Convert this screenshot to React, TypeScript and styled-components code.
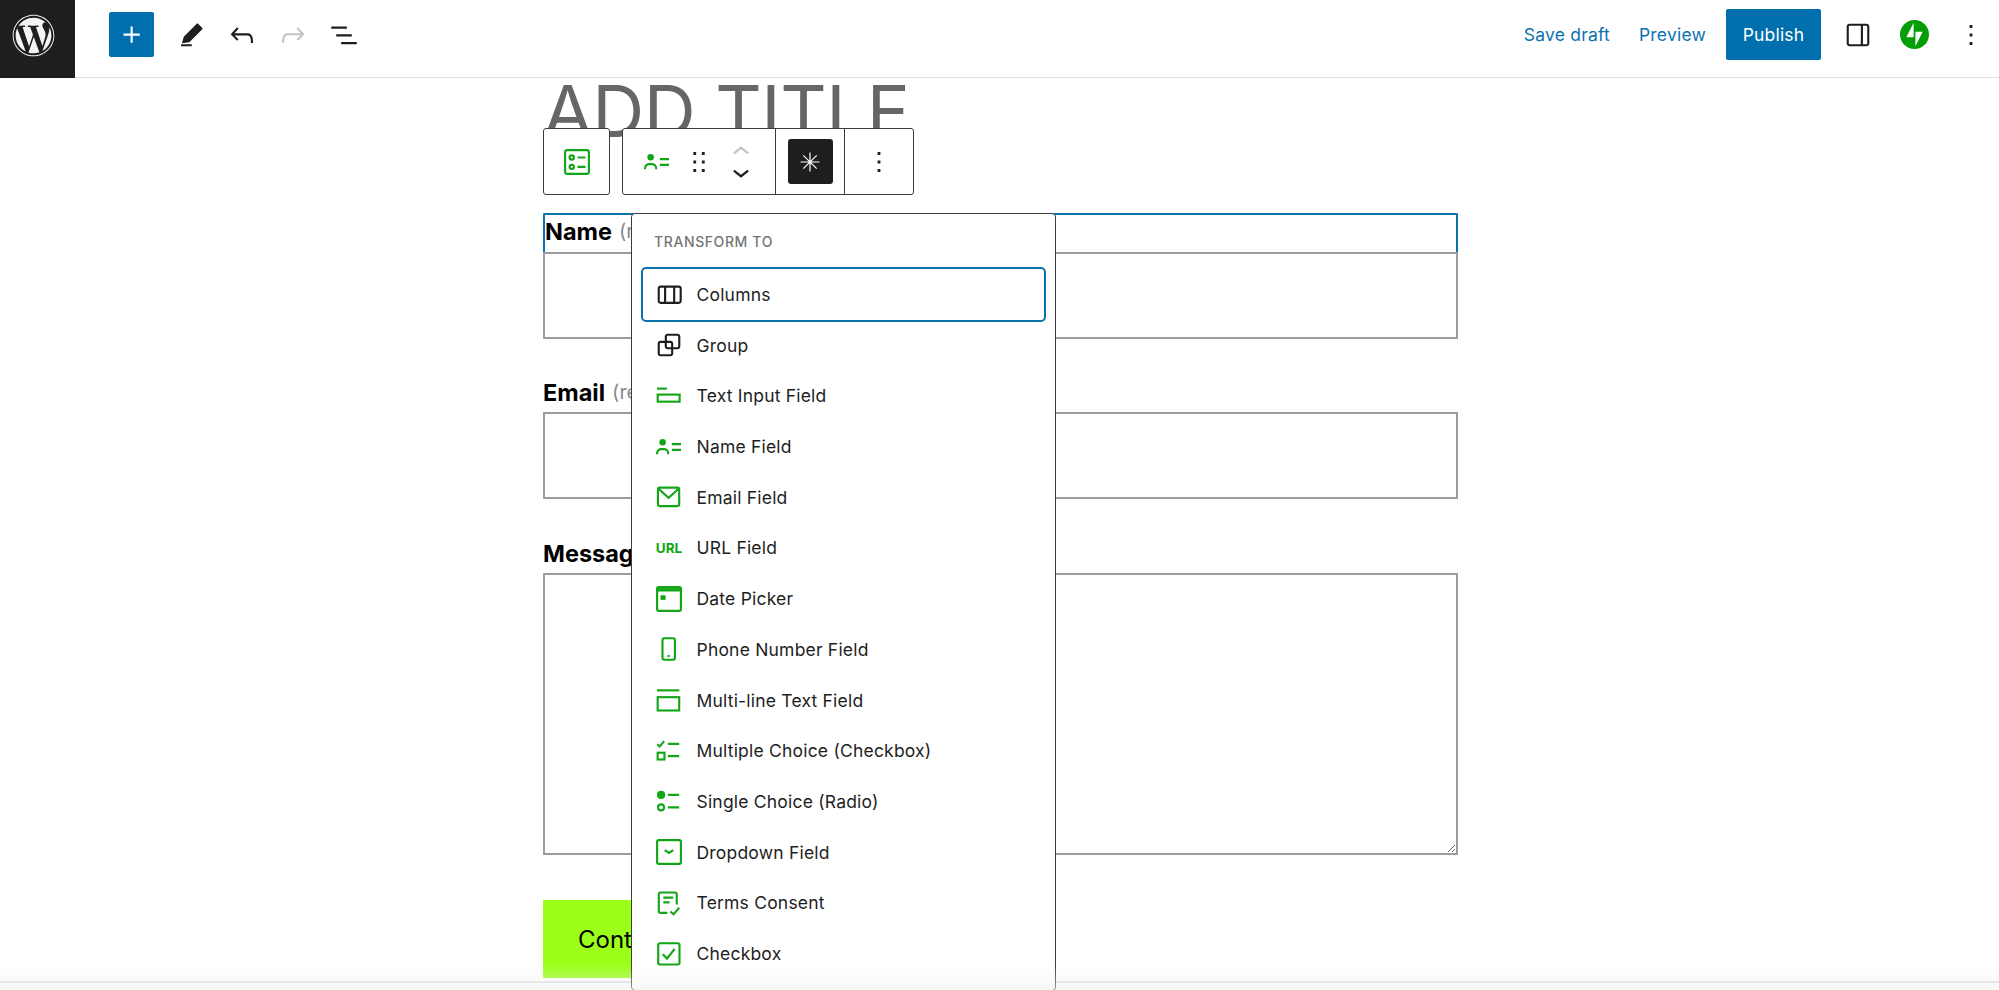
import React from 'react';
import styled, { createGlobalStyle } from 'styled-components';
import { FaWordpress } from 'react-icons/fa';

const GREEN = '#12a516';
const BLUE = '#016fae';
const FONT = 'Inter, "Liberation Sans", sans-serif';

const GlobalStyle = createGlobalStyle`
  html, body {
    margin: 0;
    padding: 0;
    background: #fff;
    font-family: ${FONT};
  }
  * {
    box-sizing: border-box;
  }
`;

const Page = styled.div`
  position: relative;
  display: flex;
  flex-direction: column;
  height: 100vh;
  overflow: hidden;
`;

const TopBar = styled.header`
  display: flex;
  justify-content: space-between;
  height: 78px;
  flex: none;
  border-bottom: 1px solid #e0e0e0;
`;

const BarSide = styled.div`
  display: flex;
  align-items: center;
  height: 69px;
`;

const ActionsSide = styled(BarSide)`
  padding-right: 3px;
`;

const LogoBox = styled.div`
  display: flex;
  align-items: center;
  width: 75px;
  height: 78px;
  padding: 0 0 8px 12px;
  background: #1e1e1e;
  color: #f4f4f4;
  font-size: 43px;
`;

const LeftCluster = styled.div`
  display: flex;
`;

const InserterButton = styled.div`
  display: flex;
  align-items: center;
  justify-content: center;
  width: 45px;
  height: 45px;
  margin: 0 11px 0 34px;
  border-radius: 2px;
  background: ${BLUE};
  color: #fff;
`;

const BarButton = styled.div<{ $muted?: boolean; $gap?: number }>`
  display: flex;
  align-items: center;
  justify-content: center;
  width: 51px;
  height: 51px;
  margin-left: ${props => props.$gap ?? 0}px;
  color: ${props => (props.$muted ? '#c4c4c4' : '#1e1e1e')};
`;

const TextAction = styled.span<{ $gap: number }>`
  margin-left: ${props => props.$gap}px;
  color: #0a72ad;
  font-size: 17.5px;
  letter-spacing: 0.2px;
`;

const PublishButton = styled.div`
  display: flex;
  align-items: center;
  justify-content: center;
  width: 95px;
  height: 51px;
  margin-left: 20px;
  border-radius: 2px;
  background: ${BLUE};
  color: #fff;
  font-size: 17.5px;
  letter-spacing: 0.2px;
`;

const Editor = styled.main`
  flex: 1;
  min-height: 0;
`;

const Canvas = styled.div`
  position: relative;
  width: 915px;
  margin-left: 543px;
`;

const PostTitle = styled.div`
  height: 135px;
  color: #666;
  font-size: 72px;
  font-weight: 380;
  letter-spacing: -0.4px;
  line-height: 66px;
`;

const Field = styled.div<{ $spacing: number }>`
  margin-bottom: ${props => props.$spacing}px;
`;

const FieldLabel = styled.div<{ $focused?: boolean }>`
  display: flex;
  align-items: center;
  gap: 7px;
  height: 39px;
  padding-bottom: ${props => (props.$focused ? 5 : 3)}px;
  border: 2px solid ${props => (props.$focused ? '#0a72ad' : 'transparent')};
  border-width: 2px 2px 0;
  border-radius: 2px 2px 0 0;
  margin-left: ${props => (props.$focused ? 0 : -2)}px;
`;

const LabelName = styled.span`
  color: #000;
  font-size: 23.5px;
  font-weight: 700;
`;

const Required = styled.span`
  color: #8a8a8a;
  font-size: 20px;
`;

const TextInput = styled.input`
  display: block;
  width: 100%;
  height: 87px;
  border: 2px solid #9b9ba0;
  border-radius: 0;
  background: #fff;
  outline: none;
`;

const MessageInput = styled.textarea`
  display: block;
  width: 100%;
  height: 282px;
  border: 2px solid #9b9ba0;
  border-radius: 0;
  background: #fff;
  outline: none;
`;

const SubmitButton = styled.div`
  display: flex;
  align-items: center;
  width: 300px;
  height: 78px;
  padding-left: 35px;
  background: #9bff1a;
  color: #000;
  font-size: 24px;
`;

const BlockToolbar = styled.div`
  position: absolute;
  top: 50px;
  left: 0;
  display: flex;
  gap: 12px;
  height: 67px;
`;

const ToolGroup = styled.div`
  display: flex;
  height: 100%;
  border: 1px solid #3c3c3c;
  border-radius: 3px;
  background: #fff;
`;

const ToolSection = styled.div<{ $width: number; $divided?: boolean }>`
  display: flex;
  align-items: center;
  justify-content: center;
  gap: 8px;
  width: ${props => props.$width}px;
  border-left: ${props => (props.$divided ? '1px solid #3c3c3c' : 'none')};
  color: #1e1e1e;
`;

const MoverStack = styled.div`
  display: flex;
  flex-direction: column;
  svg + svg {
    margin-top: -14px;
  }
`;

const StyleButton = styled.div`
  display: flex;
  align-items: center;
  justify-content: center;
  width: 45px;
  height: 45px;
  border-radius: 3px;
  background: #1e1e1e;
`;

const TransformMenu = styled.div`
  position: absolute;
  top: 135px;
  left: 88px;
  width: 425px;
  height: 778px;
  padding: 0 11px;
  border: 1px solid #3c3c3c;
  border-radius: 4px;
  background: #fff;
`;

const MenuHeading = styled.div`
  display: flex;
  align-items: center;
  height: 55px;
  padding-left: 11px;
  color: #757575;
  font-size: 14px;
  font-weight: 500;
  letter-spacing: 0.6px;
  text-transform: uppercase;
`;

const MenuRow = styled.div<{ $focused?: boolean }>`
  display: flex;
  align-items: center;
  gap: 10.5px;
  height: 50.72px;
  padding-left: 9px;
  border-radius: 3px;
  outline: ${props => (props.$focused ? '2px solid #0a72ad' : 'none')};
  color: #1e1e1e;
  font-size: 17.5px;
  letter-spacing: 0.2px;
`;

const UrlGlyph = styled.span`
  flex: none;
  width: 34px;
  color: ${GREEN};
  font-size: 13.5px;
  font-weight: 700;
  letter-spacing: 0;
  text-align: center;
`;

const Footer = styled.footer`
  flex: none;
  height: 9px;
  border-top: 2px solid #e2e2e2;
`;

const BottomFade = styled.div`
  position: absolute;
  left: 0;
  right: 0;
  bottom: 0;
  height: 26px;
  background: linear-gradient(rgba(240, 240, 240, 0), rgba(240, 240, 240, 0.5));
  pointer-events: none;
`;

const Svg = styled.svg<{ $color?: string }>`
  flex: none;
  display: block;
  width: 34px;
  height: 34px;
  fill: ${props => props.$color ?? 'currentColor'};
`;

const Line = styled.svg`
  flex: none;
  display: block;
  width: 34px;
  height: 34px;
  fill: none;
  stroke: ${GREEN};
  stroke-width: 1.5;
`;

const Fill = ({ d }: { d: string }) => (
  <Svg viewBox="0 0 24 24">
    <path d={d} />
  </Svg>
);

const PLUS = 'M11 12.5V17.5H12.5V12.5H17.5V11H12.5V6H11V11H6V12.5H11Z';
const UNDO =
  'M18.3 11.7c-.6-.6-1.4-.9-2.3-.9H6.7l2.9-3.3-1.1-1-4.5 5L8.5 16l1-1-2.7-2.7H16c.5 0 .9.2 1.3.5 1 1 1 3.4 1 4.5v.3h1.5v-.2c0-1.5 0-4.3-1.5-5.7z';
const REDO =
  'M15.6 6.5l-1.1 1 2.9 3.3H8c-.9 0-1.7.3-2.3.9-1.4 1.5-1.4 4.2-1.4 5.6v.2h1.5v-.3c0-1.1 0-3.5 1-4.5.3-.3.7-.5 1.3-.5h9.2L14.5 15l1.1 1.1 4.6-4.6-4.6-5z';
const LIST_VIEW = 'M3 6h11v1.5H3V6Zm3.5 5.5h11V13h-11v-1.5ZM21 17H10v1.5h11V17Z';
const PEN = 'M5 20h7.5v-1.5H5V20zM5.6 17.8l1.3-4.6 9-9c.4-.4.9-.4 1.3 0l2.6 2.6c.4.4.4.9 0 1.3l-9 9-5.2.7z';
const MORE = 'M13 19h-2v-2h2v2zm0-6h-2v-2h2v2zm0-6h-2V5h2v2z';
const DRAG = 'M8 7h2V5H8v2zm0 6h2v-2H8v2zm0 6h2v-2H8v2zm6-14v2h2V5h-2zm0 8h2v-2h-2v2zm0 6h2v-2h-2v2z';
const CHEVRON_UP = 'M6.5 12.4L12 8l5.5 4.4-.9 1.2L12 10l-4.5 3.6-1-1.2z';
const CHEVRON_DOWN = 'M17.5 11.6L12 16l-5.5-4.4.9-1.2L12 14l4.5-3.6 1 1.2z';
const SIDEBAR =
  'M18 4H6c-1.1 0-2 .9-2 2v12c0 1.1.9 2 2 2h12c1.1 0 2-.9 2-2V6c0-1.1-.9-2-2-2zm-4 14.5H6c-.3 0-.5-.2-.5-.5V6c0-.3.2-.5.5-.5h8v13zm4.5-.5c0 .3-.2.5-.5.5h-2.5v-13H18c.3 0 .5.2.5.5v12z';
const COLUMNS =
  'M19 6H6c-1.1 0-2 .9-2 2v9c0 1.1.9 2 2 2h13c1.1 0 2-.9 2-2V8c0-1.1-.9-2-2-2zm-4.1 1.5v10H10v-10h4.9zM5.5 17V8c0-.3.2-.5.5-.5h2.5v10H6c-.3 0-.5-.2-.5-.5zm14 0c0 .3-.2.5-.5.5h-2.6v-10H19c.3 0 .5.2.5.5v9z';
const GROUP =
  'M18 4h-7c-1.1 0-2 .9-2 2v3H6c-1.1 0-2 .9-2 2v7c0 1.1.9 2 2 2h7c1.1 0 2-.9 2-2v-3h3c1.1 0 2-.9 2-2V6c0-1.1-.9-2-2-2zm-4.5 14c0 .3-.2.5-.5.5H6c-.3 0-.5-.2-.5-.5v-7c0-.3.2-.5.5-.5h3V13c0 1.1.9 2 2 2h2.5v3zm0-4.5H11c-.3 0-.5-.2-.5-.5v-2.5H13c.3 0 .5.2.5.5v2.5zm5-.5c0 .3-.2.5-.5.5h-3V11c0-1.1-.9-2-2-2h-2.5V6c0-.3.2-.5.5-.5h7c.3 0 .5.2.5.5v7z';

const NameIcon = () => (
  <Line viewBox="0 0 24 24">
    <circle cx="7.5" cy="8.6" r="2.3" fill={GREEN} stroke="none" />
    <path d="M3.6 17.2v-.8c0-1.7 1.3-2.9 3-2.9h1.8c1.7 0 3 1.2 3 2.9v.8M14 10h6.5M14 14h6.5" />
  </Line>
);

const FormIcon = () => (
  <Line viewBox="0 0 24 24">
    <rect x="3.6" y="3.6" width="16.8" height="16.8" rx="1.6" />
    <circle cx="8.3" cy="8.8" r="1.5" />
    <circle cx="8.3" cy="15.4" r="1.5" />
    <path d="M12.4 8.8H18M12.4 15.4H18" />
  </Line>
);

const AsteriskIcon = () => (
  <svg viewBox="0 0 24 24" width="24" height="24" fill="none" stroke="#fff" strokeWidth="1.2">
    <path d="M12 2.5v19M2.5 12h19M5.3 5.3l13.4 13.4M18.7 5.3L5.3 18.7" />
  </svg>
);

const JetpackIcon = () => (
  <svg viewBox="0 0 32 32" width="29" height="29">
    <circle cx="16" cy="16" r="16" fill="#069e08" />
    <path fill="#fff" d="M15 19H7l8-16zM17 29V13h8z" />
  </svg>
);

const fieldIcons: Record<string, React.ReactNode> = {
  text: (
    <Line viewBox="0 0 24 24">
      <path d="M3.5 6.8h7" />
      <rect x="4" y="11" width="15.5" height="5" />
    </Line>
  ),
  email: (
    <Line viewBox="0 0 24 24">
      <rect x="4.2" y="5.4" width="15" height="13" rx="1.2" />
      <path d="M4.6 6.2l7.1 6.4 7.1-6.4" />
    </Line>
  ),
  date: (
    <Line viewBox="0 0 24 24">
      <rect x="3.6" y="3.6" width="16.8" height="16.8" rx="1.2" />
      <path d="M3.6 5.5h16.8" strokeWidth="2.4" />
      <rect x="6" y="9.4" width="3.6" height="3.2" fill={GREEN} stroke="none" />
    </Line>
  ),
  phone: (
    <Line viewBox="0 0 24 24">
      <rect x="7.4" y="4.4" width="8.8" height="15.2" rx="1.4" />
      <rect x="11" y="16.2" width="1.5" height="1.5" fill={GREEN} stroke="none" />
    </Line>
  ),
  multiline: (
    <Line viewBox="0 0 24 24">
      <path d="M3.5 5.2h15.8" />
      <rect x="4" y="10" width="15.2" height="9.4" />
    </Line>
  ),
  checkboxes: (
    <Line viewBox="0 0 24 24">
      <path d="M3.8 7.2l1.6 1.6L8.6 5M11.2 7h8M11.2 15.6h8" />
      <rect x="4" y="13.2" width="4.8" height="4.8" />
    </Line>
  ),
  radio: (
    <Line viewBox="0 0 24 24">
      <circle cx="6.4" cy="7" r="2.9" fill={GREEN} stroke="none" />
      <circle cx="6.4" cy="15.8" r="2.1" />
      <path d="M11.2 7h8M11.2 15.8h8" />
    </Line>
  ),
  dropdown: (
    <Line viewBox="0 0 24 24">
      <rect x="3.6" y="3.6" width="16.8" height="16.8" rx="1.2" />
      <path d="M9 10.6l3 2 3-2" />
    </Line>
  ),
  terms: (
    <Line viewBox="0 0 24 24">
      <path d="M17.5 13V6a1.4 1.4 0 0 0-1.4-1.4H6.2A1.4 1.4 0 0 0 4.8 6v11.6A1.4 1.4 0 0 0 6.2 19h4.6" />
      <path d="M8 8.2h7M8 11.6h4.4M13 18l2.2 2 4-4.6" />
    </Line>
  ),
  checkbox: (
    <Line viewBox="0 0 24 24">
      <rect x="4.4" y="4.4" width="15" height="15" rx="1.2" />
      <path d="M7.6 12.2l3 3 5.4-6.8" />
    </Line>
  ),
};

const menuItems: { label: string; icon: React.ReactNode }[] = [
  { label: 'Columns', icon: <Fill d={COLUMNS} /> },
  { label: 'Group', icon: <Fill d={GROUP} /> },
  { label: 'Text Input Field', icon: fieldIcons.text },
  { label: 'Name Field', icon: <NameIcon /> },
  { label: 'Email Field', icon: fieldIcons.email },
  { label: 'URL Field', icon: <UrlGlyph>URL</UrlGlyph> },
  { label: 'Date Picker', icon: fieldIcons.date },
  { label: 'Phone Number Field', icon: fieldIcons.phone },
  { label: 'Multi-line Text Field', icon: fieldIcons.multiline },
  { label: 'Multiple Choice (Checkbox)', icon: fieldIcons.checkboxes },
  { label: 'Single Choice (Radio)', icon: fieldIcons.radio },
  { label: 'Dropdown Field', icon: fieldIcons.dropdown },
  { label: 'Terms Consent', icon: fieldIcons.terms },
  { label: 'Checkbox', icon: fieldIcons.checkbox },
];

const App = () => {
  return (
    <Page>
      <GlobalStyle />
      <TopBar>
        <LeftCluster>
          <LogoBox>
            <FaWordpress />
          </LogoBox>
          <BarSide>
            <InserterButton>
              <Fill d={PLUS} />
            </InserterButton>
            <BarButton>
              <Fill d={PEN} />
            </BarButton>
            <BarButton>
              <Fill d={UNDO} />
            </BarButton>
            <BarButton $muted>
              <Fill d={REDO} />
            </BarButton>
            <BarButton>
              <Fill d={LIST_VIEW} />
            </BarButton>
          </BarSide>
        </LeftCluster>
        <ActionsSide>
          <TextAction $gap={0}>Save draft</TextAction>
          <TextAction $gap={29}>Preview</TextAction>
          <PublishButton>Publish</PublishButton>
          <BarButton $gap={11}>
            <Fill d={SIDEBAR} />
          </BarButton>
          <BarButton $gap={6}>
            <JetpackIcon />
          </BarButton>
          <BarButton $gap={5}>
            <Fill d={MORE} />
          </BarButton>
        </ActionsSide>
      </TopBar>

      <Editor>
        <Canvas>
          <PostTitle>ADD TITLE</PostTitle>
          <Field $spacing={34}>
            <FieldLabel $focused>
              <LabelName>Name</LabelName>
              <Required>(required)</Required>
            </FieldLabel>
            <TextInput readOnly />
          </Field>
          <Field $spacing={35}>
            <FieldLabel>
              <LabelName>Email</LabelName>
              <Required>(required)</Required>
            </FieldLabel>
            <TextInput readOnly />
          </Field>
          <Field $spacing={45}>
            <FieldLabel>
              <LabelName>Message</LabelName>
              <Required>(required)</Required>
            </FieldLabel>
            <MessageInput readOnly />
          </Field>
          <SubmitButton>Contact Us</SubmitButton>

          <BlockToolbar>
            <ToolGroup>
              <ToolSection $width={65}>
                <FormIcon />
              </ToolSection>
            </ToolGroup>
            <ToolGroup>
              <ToolSection $width={152}>
                <NameIcon />
                <Fill d={DRAG} />
                <MoverStack>
                  <Svg viewBox="0 0 24 24" $color="#c4c4c4">
                    <path d={CHEVRON_UP} />
                  </Svg>
                  <Fill d={CHEVRON_DOWN} />
                </MoverStack>
              </ToolSection>
              <ToolSection $width={69} $divided>
                <StyleButton>
                  <AsteriskIcon />
                </StyleButton>
              </ToolSection>
              <ToolSection $width={69} $divided>
                <Fill d={MORE} />
              </ToolSection>
            </ToolGroup>
          </BlockToolbar>

          <TransformMenu>
            <MenuHeading>Transform to</MenuHeading>
            {menuItems.map((item, i) => (
              <MenuRow key={item.label} $focused={i === 0}>
                {item.icon}
                {item.label}
              </MenuRow>
            ))}
          </TransformMenu>
        </Canvas>
      </Editor>

      <Footer />
      <BottomFade />
    </Page>
  );
};

export default App;
